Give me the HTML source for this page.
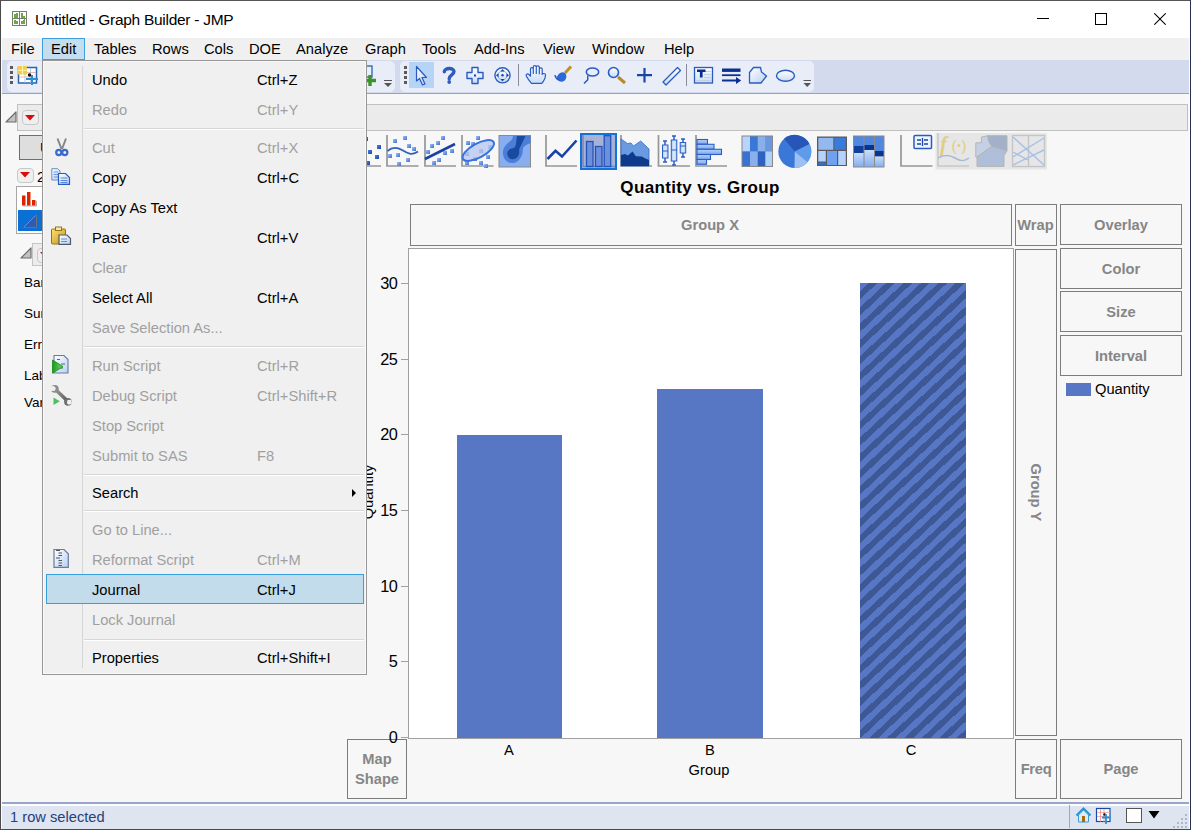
<!DOCTYPE html>
<html><head><meta charset="utf-8">
<style>
*{box-sizing:border-box;margin:0;padding:0}
html,body{width:1191px;height:830px;overflow:hidden;background:#f7f7f7;font-family:"Liberation Sans",sans-serif;color:#000}
.a{position:absolute}
.t{position:absolute;white-space:nowrap;font-size:14.7px;line-height:1}
#frame{position:absolute;left:0;top:0;width:1191px;height:830px;border:1px solid #555;border-left-color:#4a4a4a;border-right-color:#26304c;border-bottom-color:#4a4a4a;box-shadow:inset 1px 0 0 #fcfcfc,inset -1px 0 0 #fcfcfc;pointer-events:none;z-index:100}
#title{left:0;top:0;width:1191px;height:38px;background:#fff}
#menubar{left:0;top:38px;width:1191px;height:22px;background:#f0f0f0}
#toolbar{left:0;top:60px;width:1191px;height:34px;background:#d4daee;border-bottom:1px solid #95a1c9}
.tg{position:absolute;top:1px;height:31px;background:#e9edf8;border-radius:5px}
#status{left:0;top:802px;width:1191px;height:28px;background:#dfe5f0;border-top:2px solid #9aa3c8;box-shadow:inset 0 2px 0 #fbfcfe}
.box{position:absolute;border:1px solid #7c7c7c;background:#f7f7f7;color:#868686;font-weight:bold;font-size:14.7px;text-align:center}
.mi{position:absolute;left:92px;white-space:nowrap;font-size:14.7px;line-height:1}
.sc{position:absolute;left:257px;white-space:nowrap;font-size:14.7px;line-height:1}
.dis{color:#a0a0a0}
.yl{left:347px;width:50px;text-align:right;font-size:16.3px;letter-spacing:-0.7px}
.sep{position:absolute;left:84px;width:280px;height:2px;border-top:1px solid #d7d7d7;background:#fff}
</style></head><body>

<!-- title bar -->
<div id="title" class="a">
  <svg class="a" style="left:12px;top:11px" width="15" height="15" viewBox="0 0 15 15" shape-rendering="crispEdges">
    <rect x="0.5" y="0.5" width="14" height="14" fill="#fff" stroke="#7b7b7b"/>
    <path d="M7.5 0V15M0 7.5H15" stroke="#7b7b7b"/>
    <path d="M2 3h2v-1h1.5v4.5H2z" fill="#6aad35"/>
    <path d="M9 2h1.5v3H13v1.5H9z" fill="#6aad35"/>
    <path d="M2 9h1.5v1H5.5v3H2z" fill="#6aad35"/>
    <path d="M9 10h1.5v-1H12v-1h1v5H9z" fill="#6aad35"/>
  </svg>
  <div class="t" style="left:35px;top:12px;font-size:15.5px;letter-spacing:-0.28px">Untitled - Graph Builder - JMP</div>
  <!-- window controls -->
  <div class="a" style="left:1037px;top:18px;width:12px;height:1px;background:#000"></div>
  <div class="a" style="left:1095px;top:13px;width:12px;height:12px;border:1px solid #000"></div>
  <svg class="a" style="left:1154px;top:13px" width="12" height="12" viewBox="0 0 12 12"><path d="M0.3 0.3L11.7 11.7M11.7 0.3L0.3 11.7" stroke="#000" stroke-width="1.05"/></svg>
</div>

<!-- menu bar -->
<div id="menubar" class="a">
  <div class="a" style="left:42px;top:0;width:43px;height:22px;background:#c4def0;border:1px solid #3d9fdb"></div>
  <div class="t" style="left:11px;top:4px">File</div>
  <div class="t" style="left:51px;top:4px">Edit</div>
  <div class="t" style="left:94px;top:4px">Tables</div>
  <div class="t" style="left:152px;top:4px">Rows</div>
  <div class="t" style="left:204px;top:4px">Cols</div>
  <div class="t" style="left:249px;top:4px">DOE</div>
  <div class="t" style="left:296px;top:4px">Analyze</div>
  <div class="t" style="left:365px;top:4px">Graph</div>
  <div class="t" style="left:422px;top:4px">Tools</div>
  <div class="t" style="left:474px;top:4px">Add-Ins</div>
  <div class="t" style="left:543px;top:4px">View</div>
  <div class="t" style="left:592px;top:4px">Window</div>
  <div class="t" style="left:664px;top:4px">Help</div>
</div>

<!-- toolbar -->
<div id="toolbar" class="a">
  <div class="tg" style="left:7px;width:388px"></div>
  <div class="tg" style="left:400px;width:414px"></div>
  <div class="a" style="left:409px;top:2px;width:25px;height:26px;background:#b5d4f6"></div>
  <svg class="a" style="left:0;top:0" width="830" height="34" viewBox="0 60 830 34">
    <defs>
      <linearGradient id="tg1" x1="0" y1="0" x2="0" y2="1"><stop offset="0" stop-color="#ffffff"/><stop offset="1" stop-color="#c8dcf4"/></linearGradient>
      <linearGradient id="tg2" x1="0" y1="0" x2="1" y2="1"><stop offset="0" stop-color="#ffffff"/><stop offset="1" stop-color="#b8d0f0"/></linearGradient>
    </defs>
    <!-- gripper 1 -->
    <g fill="#5a5a5a"><rect x="10" y="66" width="3" height="3"/><rect x="10" y="71" width="3" height="3"/><rect x="10" y="76" width="3" height="3"/><rect x="10" y="81" width="3" height="3"/></g>
    <!-- first icon: data grid w/ star -->
    <rect x="18.5" y="67.5" width="18" height="15.5" fill="#fff" stroke="#2a62b0" stroke-width="1.5"/>
    <path d="M19 72.5H36M19 77H36" stroke="#f0a0a0" stroke-width="0.8"/>
    <path d="M25 68V83M30.5 68V83" stroke="#a0c0e8" stroke-width="0.8"/>
    <rect x="18" y="66" width="9" height="8.5" fill="#f0cc50"/>
    <path d="M22.5 66V74.5M18 70.25H27" stroke="#fff3b0" stroke-width="1"/>
    <circle cx="29.5" cy="75" r="1.7" fill="#111"/>
    <path d="M26 79H38M32 75V85" stroke="#2a90d0" stroke-width="2"/>
    <!-- visible part of last icon of group 1 -->
    <rect x="364" y="66" width="8" height="11" fill="#e8f0fa" stroke="#2a62b0" stroke-width="1.3"/>
    <path d="M365 80.5H376M370 75V86" stroke="#3c9428" stroke-width="3.4"/>
    <!-- chevron 1 -->
    <path d="M384 80.5H392" stroke="#555" stroke-width="1"/>
    <path d="M384 83H392L388 87Z" fill="#555"/>
    <!-- gripper 2 -->
    <g fill="#5a5a5a"><rect x="404" y="66" width="3" height="3"/><rect x="404" y="71" width="3" height="3"/><rect x="404" y="76" width="3" height="3"/><rect x="404" y="81" width="3" height="3"/></g>
    <!-- arrow -->
    <path d="M416.5 66.5V81L419.5 78.5L422.5 85L425 84L422 77.5H426.5Z" fill="url(#tg2)" stroke="#2a5bbf" stroke-width="1.2" stroke-linejoin="round"/>
    <!-- ? -->
    <path d="M444.3 71.8C444.3 67.6 454 67.3 454 71.6C454 75 449.2 74.8 449.2 78.8" fill="none" stroke="#2d5cc0" stroke-width="3.4" stroke-linecap="round"/><circle cx="449.2" cy="82" r="1.9" fill="#2d5cc0"/>
    <!-- move plus -->
    <path d="M472 67.5H478V72.5H483V78.5H478V83.5H472V78.5H467V72.5H472Z" fill="url(#tg1)" stroke="#2a5bbf" stroke-width="1.4" stroke-linejoin="round"/>
    <rect x="474" y="74.5" width="2" height="2" fill="#1a44a8"/>
    <!-- target -->
    <circle cx="502.5" cy="75.3" r="7.6" fill="url(#tg1)" stroke="#2a5bbf" stroke-width="1.4"/>
    <circle cx="502.5" cy="75.3" r="4.5" fill="none" stroke="#8ab0e8" stroke-width="1"/>
    <path d="M502.5 69L500.5 71.5H504.5ZM502.5 81.6L500.5 79H504.5ZM496 75.3L498.5 73.3V77.3ZM509 75.3L506.5 73.3V77.3Z" fill="#1a44a8"/>
    <circle cx="502.5" cy="75.3" r="1.2" fill="#1a44a8"/>
    <!-- sep -->
    <path d="M518.5 64V86" stroke="#8a8a9a" stroke-width="1"/>
    <!-- hand -->
    <path d="M531.5 83.3C529.5 81 527.5 78.5 526.3 76C525.6 74.5 527.3 73.2 528.8 74.5L530.5 76.2V69C530.5 67.2 533.3 67.2 533.3 69V73.5V67C533.3 65.2 536.3 65.2 536.3 67V73.5V67.2C536.3 65.4 539.3 65.4 539.3 67.2V73.8V69.2C539.3 67.5 542.2 67.5 542.2 69.2V74.5C542.2 73.2 545.5 73 545.5 74.8C545.5 78.5 543.5 81.5 541.8 83.3Z" fill="url(#tg1)" stroke="#2a5bbf" stroke-width="1.2" stroke-linejoin="round"/>
    <!-- brush -->
    <path d="M565 73L571 66.5" stroke="#c09020" stroke-width="3"/>
    <path d="M556 76C557 81 561 83 564 81C567 79 567 75 565 73C563 71.5 560 72 558 75C557.5 76.5 556.5 77 556 76Z" fill="#2a6ad8"/>
    <path d="M555 75C555.5 78 557 79.5 559 80" fill="none" stroke="#2a5bbf" stroke-width="1.5"/>
    <!-- lasso -->
    <ellipse cx="592.5" cy="72" rx="6.2" ry="4" fill="none" stroke="#2a5bbf" stroke-width="1.5"/>
    <path d="M588 75.5C587 78 588.5 78.5 587.5 80L584 83.5" fill="none" stroke="#2a5bbf" stroke-width="1.5"/>
    <!-- magnifier -->
    <path d="M618 77L625 83" stroke="#b88a30" stroke-width="3"/>
    <circle cx="613.5" cy="72.5" r="5" fill="url(#tg1)" stroke="#2a5bbf" stroke-width="1.6"/>
    <!-- crosshair -->
    <path d="M644.5 68V82.5M637 75.2H652" stroke="#1a44a8" stroke-width="2.2"/>
    <!-- ruler -->
    <path d="M663 82L677.5 67.5L680.5 70.5L666 85Z" fill="url(#tg1)" stroke="#2a5bbf" stroke-width="1.3" stroke-linejoin="round"/>
    <!-- sep -->
    <path d="M686.5 64V86" stroke="#8a8a9a" stroke-width="1"/>
    <!-- T text -->
    <rect x="694.5" y="67.5" width="18" height="15.5" fill="url(#tg1)" stroke="#2a5bbf" stroke-width="1.3"/>
    <path d="M704 71.5H711M704 74.5H711M704 77.5H711M696 80.5H711" stroke="#c4d0e2" stroke-width="1"/>
    <path d="M697 69.6H705.5V72H702.6V77.5H699.9V72H697Z" fill="#0a2a90"/>
    <!-- lines arrow -->
    <rect x="722" y="68.5" width="18.5" height="3.4" fill="#0a3094"/>
    <path d="M722 75.2H740.5" stroke="#0a3094" stroke-width="1.8"/>
    <path d="M722 80.5H737" stroke="#0a3094" stroke-width="2"/>
    <path d="M736 77L741.2 80.5L736 84Z" fill="#0a3094"/>
    <!-- polygon -->
    <path d="M749.5 72.5L753.5 67.5H760.5L761.5 72L766.5 76L761 83H749.5Z" fill="url(#tg2)" stroke="#2a5bbf" stroke-width="1.3" stroke-linejoin="round"/>
    <!-- ellipse -->
    <ellipse cx="785.5" cy="75.8" rx="9" ry="5.5" fill="url(#tg1)" stroke="#2a5bbf" stroke-width="1.4"/>
    <!-- chevron 2 -->
    <path d="M803.5 80.5H811" stroke="#555" stroke-width="1"/>
    <path d="M803.5 83H811L807.25 87Z" fill="#555"/>
  </svg>

</div>

<!-- content -->
<div class="a" style="left:0;top:94px;width:1191px;height:708px;background:#f7f7f7">
  
</div>


  <!-- band -->
  <div class="a" style="left:17px;top:104px;width:1171px;height:27px;background:#ebebeb;border:1px solid #c0c0c0"></div>
  <svg class="a" style="left:5px;top:111px" width="12" height="12"><path d="M1 11L11 1V11Z" fill="#c2c2c2" stroke="#6d6d6d" stroke-width="1.2" stroke-linejoin="round"/></svg>
  <div class="a" style="left:22px;top:110px;width:17px;height:15px;border:1px solid #c8c8c8;border-radius:4px;background:#efefef"></div>
  <svg class="a" style="left:25px;top:115px" width="11" height="6"><path d="M0 0H10L5 5.5Z" fill="#d80c0c"/></svg>
  <!-- undo button -->
  <div class="a" style="left:19px;top:135px;width:60px;height:25px;background:#dedede;border:1px solid #6e6e6e"></div>
  <div class="t" style="left:40px;top:141px">U</div>
  <!-- dropdown 2 -->
  <div class="a" style="left:17px;top:168px;width:17px;height:15px;border:1px solid #c8c8c8;border-radius:4px;background:#efefef"></div>
  <svg class="a" style="left:20px;top:172px" width="11" height="6"><path d="M0 0H10L5 5.5Z" fill="#d80c0c"/></svg>
  <div class="t" style="left:37px;top:170px">2</div>
  <!-- listbox -->
  <div class="a" style="left:16px;top:186px;width:60px;height:48px;background:#fff;border:1px solid #a6a6a6"></div>
  <svg class="a" style="left:22px;top:192px" width="16" height="16"><rect x="0" y="3.5" width="3.5" height="10" fill="#dd2400"/><rect x="5" y="0" width="3.5" height="13.5" fill="#dd2400"/><rect x="10" y="8" width="3.5" height="5.5" fill="#dd2400"/><path d="M1 14H14.5V9" stroke="#5a5a5a" stroke-width="0.8" fill="none" opacity="0.6"/></svg>
  <div class="a" style="left:18px;top:210px;width:58px;height:21px;background:#0b70d6"></div>
  <svg class="a" style="left:23px;top:214px" width="14" height="14"><path d="M0.5 13.5L13 1V13.5Z" fill="#2f5bb0"/><path d="M1 13L12.5 1.5" stroke="#6aa0f0" stroke-width="0.8"/><path d="M0.5 13.5H13.5V1" stroke="#8a7060" stroke-width="0.8" fill="none"/></svg>
  <!-- second disclosure -->
  <div class="a" style="left:32px;top:243px;width:60px;height:23px;background:#ececec;border:1px solid #c4c4c4"></div>
  <svg class="a" style="left:20px;top:247px" width="12" height="12"><path d="M1 11L11 1V11Z" fill="#c2c2c2" stroke="#6d6d6d" stroke-width="1.2" stroke-linejoin="round"/></svg>
  <div class="a" style="left:37px;top:248px;width:17px;height:15px;border:1px solid #c8c8c8;border-radius:4px;background:#efefef"></div>
  <svg class="a" style="left:40px;top:252px" width="11" height="6"><path d="M0 0H10L5 5.5Z" fill="#d80c0c"/></svg>
  <div class="t" style="left:24px;top:276px;font-size:13.5px">Bar</div>
  <div class="t" style="left:24px;top:307px;font-size:13.5px">Sum</div>
  <div class="t" style="left:24px;top:338px;font-size:13.5px">Err</div>
  <div class="t" style="left:24px;top:369px;font-size:13.5px">Lab</div>
  <div class="t" style="left:24px;top:396px;font-size:13.5px">Var</div>

  <!-- chart type icons -->
  <svg class="a" style="left:340px;top:130px" width="720" height="42" viewBox="340 130 720 42" shape-rendering="geometricPrecision">
    <defs>
      <linearGradient id="sq" x1="0" y1="0" x2="1" y2="1"><stop offset="0" stop-color="#9fc0f4"/><stop offset="1" stop-color="#3f70d0"/></linearGradient>
      <linearGradient id="sqd" x1="0" y1="0" x2="1" y2="1"><stop offset="0" stop-color="#4f80e0"/><stop offset="1" stop-color="#1a44a8"/></linearGradient>
      <linearGradient id="bx" x1="0" y1="0" x2="1" y2="0"><stop offset="0" stop-color="#a8c8f6"/><stop offset="0.5" stop-color="#e0eefc"/><stop offset="1" stop-color="#a8c8f6"/></linearGradient>
      <linearGradient id="hb" x1="0" y1="0" x2="0" y2="1"><stop offset="0" stop-color="#b8d4fa"/><stop offset="1" stop-color="#7aa4ea"/></linearGradient>
      <linearGradient id="mz" x1="0" y1="0" x2="0" y2="1"><stop offset="0" stop-color="#c8defc"/><stop offset="1" stop-color="#86aeee"/></linearGradient>
    </defs>
    <g fill="none" stroke="#969696" stroke-width="1.7">
      <!-- axes -->
      <path d="M349 135V166H381"/>
      <path d="M387 135V166H418.5"/>
      <path d="M425 135V166H456"/>
      <path d="M462 135V166H493.5"/>
      <path d="M546 135V166H577"/>
      <path d="M621 135V166H652"/>
      <path d="M658.5 135V166H690"/>
      <path d="M696 135V166H727"/>
      <path d="M901 135V166H932.5"/>
    </g>
    <!-- points icon -->
    <g fill="url(#sqd)">
      <rect x="364" y="137" width="4" height="4"/><rect x="377" y="145" width="4" height="4"/><rect x="368" y="150" width="4" height="4"/>
      <rect x="375" y="155" width="4" height="4"/><rect x="366" y="161" width="4" height="4"/><rect x="358" y="141" width="4" height="4"/>
    </g>
    <!-- smoother -->
    <g fill="url(#sq)">
      <rect x="393" y="139" width="4" height="4"/><rect x="403" y="136" width="4" height="4"/><rect x="407" y="144" width="4" height="4"/>
      <rect x="412" y="147" width="4" height="4"/><rect x="388" y="154" width="4" height="4"/><rect x="396" y="153" width="4" height="4"/>
      <rect x="406" y="158" width="4" height="4"/><rect x="397" y="162" width="4" height="4"/>
    </g>
    <path d="M387.5 151C392 147 397 147 402 150S412 156 418 151.5" fill="none" stroke="#3060b8" stroke-width="1.8"/>
    <!-- line fit -->
    <g fill="url(#sq)">
      <rect x="441" y="136" width="4" height="4"/><rect x="436" y="141" width="4" height="4"/><rect x="430" y="144" width="4" height="4"/>
      <rect x="426" y="150" width="4" height="4"/><rect x="443" y="151" width="4" height="4"/><rect x="450" y="149" width="4" height="4"/>
      <rect x="437" y="158" width="4" height="4"/><rect x="432" y="161" width="4" height="4"/>
    </g>
    <path d="M425 159L455 144" stroke="#1a42a4" stroke-width="2.6"/>
    <!-- ellipse -->
    <g fill="url(#sq)">
      <rect x="476" y="136" width="4" height="4"/><rect x="466" y="141" width="4" height="4"/><rect x="471" y="142" width="4" height="4"/>
      <rect x="488" y="145" width="4" height="4"/><rect x="479" y="149" width="4" height="4"/><rect x="465" y="152" width="4" height="4"/>
      <rect x="486" y="155" width="4" height="4"/><rect x="473" y="157" width="4" height="4"/><rect x="465" y="161" width="4" height="4"/>
      <rect x="479" y="161" width="4" height="4"/><rect x="484" y="164" width="4" height="4"/>
    </g>
    <ellipse cx="478.3" cy="150.5" rx="17.5" ry="7" transform="rotate(-29 478.3 150.5)" fill="#b4c6f0" fill-opacity="0.75" stroke="#3a72dc" stroke-width="2"/>
    <!-- contour -->
    <rect x="499" y="135.5" width="31.5" height="31.5" fill="#88aef0" stroke="#8a8a8a" stroke-width="1"/>
    <path d="M513 136H530.5V143C526.5 144.5 523.5 146 523 148.5C522.5 151 523 153 521.5 156C519.5 160.5 516 163.5 511.5 163C506 162.5 502.5 157.5 503 151.5C503.5 146.5 508 143 511 140.5C512.3 139.3 512.8 137.8 513 136Z" fill="#4a7ed8"/>
    <path d="M517 136H525.5L519.5 148.5C518.8 150 519.5 151.5 519 154C518.2 157.5 515.5 159.5 512.5 159.2C509 158.8 507 156 507.3 153C507.6 150.3 509.8 148.8 512 148.5C514 148.2 515.2 147 515.8 145Z" fill="#1a4aa0"/>
    <!-- line chart -->
    <path d="M547.5 159L555.5 150.8L562 156.5L576.5 140.5" fill="none" stroke="#1a42a4" stroke-width="2.6"/>
    <!-- bar chart selected -->
    <rect x="581" y="134" width="35" height="35" fill="#a6b3d6" stroke="#1272d8" stroke-width="2"/>
    <path d="M583 135V166.5H615" fill="none" stroke="#7787b8" stroke-width="1.5"/>
    <g fill="#6d90dc" stroke="#2453b8" stroke-width="1.3">
      <rect x="586.5" y="141.5" width="6.5" height="25"/>
      <rect x="595.5" y="146.5" width="6.5" height="20"/>
      <rect x="604.2" y="135.7" width="6.5" height="30.8"/>
    </g>
    <!-- area -->
    <path d="M621 139L627.5 143.5L631 143L633.5 146L640.7 141L649 149V166H621Z" fill="#6a9ae0" stroke="#3a6cc8" stroke-width="0.8"/>
    <path d="M621 155L625 154L628 155.5L632.5 151.5L635.8 156.3L641.7 156.6L645 158.2L649 160V166H621Z" fill="#0d3a8c"/>
    <!-- box plot -->
    <g stroke="#2a5fc8" stroke-width="1" fill="url(#bx)">
      <path d="M665 141V145M665 158V162M663 141H667M663 162H667M674 136V140M674 161V165M672 136H676M672 165H676M683 139V142.5M683 153V157M681 139H685M681 157H685" fill="none" stroke-width="1.5"/>
      <rect x="662.5" y="145" width="5.5" height="13"/>
      <rect x="671.3" y="140" width="5.5" height="21"/>
      <rect x="680.2" y="142.5" width="5.5" height="10.5"/>
      <path d="M662.5 151H668M671.3 150H677M680.2 146H686" fill="none"/>
    </g>
    <!-- histogram -->
    <g fill="url(#hb)" stroke="#2a5fc8" stroke-width="1.1">
      <rect x="697" y="139.5" width="10.5" height="4.8"/>
      <rect x="697" y="144.3" width="17" height="5"/>
      <rect x="697" y="149.3" width="24.5" height="5.2"/>
      <rect x="697" y="154.5" width="13.5" height="5"/>
      <rect x="697" y="159.5" width="9.5" height="4.8"/>
    </g>
    <!-- heatmap -->
    <rect x="741.5" y="135.5" width="31.5" height="31.5" fill="#888"/>
    <rect x="742.5" y="136.5" width="7.5" height="15" fill="#b8d4fa"/><rect x="750" y="136.5" width="7.8" height="15" fill="#3a78d8"/>
    <rect x="757.8" y="136.5" width="7.6" height="15" fill="#8ab0ec"/><rect x="765.4" y="136.5" width="6.6" height="15" fill="#6a98e0"/>
    <rect x="742.5" y="151.5" width="7.5" height="14.5" fill="#3a72d4"/><rect x="750" y="151.5" width="7.8" height="14.5" fill="#8ab0ec"/>
    <rect x="757.8" y="151.5" width="7.6" height="14.5" fill="#2f62c0"/><rect x="765.4" y="151.5" width="6.6" height="14.5" fill="#b0d0fa"/>
    <!-- pie -->
    <circle cx="794.8" cy="151.5" r="16.5" fill="#3a78d8"/>
    <path d="M794.8 151.5L784 138.8A16.5 16.5 0 0 1 809.5 144Z" fill="#2856b8"/>
    <path d="M794.8 151.5L809.5 144A16.5 16.5 0 0 1 807.5 162Z" fill="#5e9be8"/>
    <path d="M794.8 151.5L807.5 162A16.5 16.5 0 0 1 794.5 168Z" fill="#9cc0f4"/>
    <!-- treemap -->
    <rect x="817" y="136.5" width="30" height="29.5" fill="#5a5a5a"/>
    <rect x="818.3" y="137.8" width="15" height="12" fill="#94b8f0"/>
    <rect x="834.3" y="137.8" width="11.5" height="12" fill="#3a7ad8"/>
    <rect x="818.3" y="151" width="7.5" height="10.5" fill="#b5d3fa"/>
    <rect x="818.3" y="162.5" width="7.5" height="2.5" fill="#3070d0"/>
    <rect x="827" y="151" width="10" height="14" fill="#70a0f0"/>
    <rect x="838.2" y="151" width="7.6" height="14" fill="#b5d3fa"/>
    <!-- mosaic -->
    <rect x="853" y="135.5" width="31.5" height="32" fill="#8a8a8a"/>
    <rect x="854" y="136.5" width="9.5" height="9.5" fill="#5088e0"/><rect x="854" y="146" width="9.5" height="7" fill="#123e9c"/><rect x="854" y="153" width="9.5" height="13.5" fill="url(#mz)"/>
    <rect x="864.5" y="136.5" width="9.5" height="8.5" fill="#5088e0"/><rect x="864.5" y="145" width="9.5" height="5" fill="#0a3494"/><rect x="864.5" y="150" width="9.5" height="16.5" fill="url(#mz)"/>
    <rect x="875" y="136.5" width="8.5" height="14.5" fill="#5088e0"/><rect x="875" y="151" width="8.5" height="5.5" fill="#0a3494"/><rect x="875" y="156.5" width="8.5" height="10" fill="url(#mz)"/>
    <!-- caption -->
    <rect x="914" y="135.5" width="17.5" height="13" rx="1" fill="#eef4fc" stroke="#2a5bbf" stroke-width="1.5"/>
    <path d="M917 140H921M924 140H928M917 144H921M924 144H928M922.5 138V146" stroke="#1a44a8" stroke-width="1.3"/>
    <!-- disabled group -->
    <rect x="935.5" y="133" width="111.5" height="36.5" fill="#e6e6e6"/>
    <path d="M938 133V166H969" fill="none" stroke="#c8c8c8" stroke-width="1.5"/>
    <text x="940" y="151" font-family="Liberation Serif" font-style="italic" font-weight="bold" font-size="21" fill="#e0cc88">f</text>
    <text x="951.5" y="150.5" font-family="Liberation Sans" font-size="15" fill="#e0cc88">(</text><circle cx="958.8" cy="145.5" r="1.5" fill="#e0cc88"/><text x="961.5" y="150.5" font-family="Liberation Sans" font-size="15" fill="#e0cc88">)</text>
    <path d="M938 158C945 154 950 155 955 158S964 162 969 158" fill="none" stroke="#a8b8d8" stroke-width="1.5"/>
    <path d="M975.8 142.8H981.4V137.1L987.8 135.7C988 139 988.5 141 992 146.4L977 157H975.8Z" fill="#c4d0e4" stroke="#b4b4b4" stroke-width="1"/>
    <path d="M987.8 135.7H1007V150.7L998.5 148.6L992 146.4C989 143 988 140 987.8 135.7Z" fill="#a2b0ca" stroke="#b4b4b4" stroke-width="1"/>
    <path d="M977 157L992 146.4L998.5 148.6L1007 150.7L1004 155.7V166.4H977Z" fill="#afbfda" stroke="#b4b4b4" stroke-width="1"/>
    <rect x="1012.5" y="135.5" width="32" height="31" fill="none" stroke="#c4c4c4" stroke-width="1.3"/>
    <path d="M1028.5 135.5V166.5" stroke="#c4c4c4" stroke-width="1.3"/>
    <path d="M1013 137L1044 165M1013 157L1044 138M1013 165L1044 150M1013 152L1028 160" stroke="#a8c0e8" stroke-width="1.4"/>
  </svg>

  <!-- chart title -->
  <div class="t" style="left:600px;width:200px;text-align:center;top:179px;font-size:17px;font-weight:bold;letter-spacing:0.35px">Quantity vs. Group</div>
  <!-- boxes -->
  <div class="box" style="left:410px;top:204px;width:602px;height:42px;line-height:41px;text-indent:-2px">Group X</div>
  <div class="box" style="left:1015px;top:204px;width:42px;height:42px;line-height:41px;letter-spacing:0px;text-indent:-1px">Wrap</div>
  <div class="box" style="left:1060px;top:204px;width:122px;height:41px;line-height:41px">Overlay</div>
  <div class="box" style="left:1060px;top:248px;width:122px;height:41px;line-height:41px">Color</div>
  <div class="box" style="left:1060px;top:291px;width:122px;height:41px;line-height:41px">Size</div>
  <div class="box" style="left:1060px;top:335px;width:122px;height:41px;line-height:41px">Interval</div>
  <div class="box" style="left:1015px;top:249px;width:42px;height:487px"></div>
  <div class="t" style="left:986px;width:100px;text-align:center;top:485px;transform:rotate(90deg);font-weight:bold;color:#868686;font-size:14.7px">Group Y</div>
  <div class="box" style="left:1015px;top:739px;width:42px;height:60px;line-height:58px;letter-spacing:-0.3px">Freq</div>
  <div class="box" style="left:1060px;top:739px;width:122px;height:60px;line-height:58px">Page</div>
  <div class="box" style="left:347px;top:739px;width:60px;height:60px;line-height:20px;padding-top:9px">Map<br>Shape</div>
  <!-- legend -->
  <div class="a" style="left:1066px;top:383px;width:25px;height:13px;background:#5777c4"></div>
  <div class="t" style="left:1095px;top:382px">Quantity</div>
  <!-- plot -->
  <div class="a" style="left:408px;top:248px;width:606px;height:491px;background:#fff;border:1px solid #a0a0a0"></div>
  <div class="a" style="left:457px;top:435px;width:105px;height:303px;background:#5777c4"></div>
  <div class="a" style="left:657px;top:389px;width:106px;height:349px;background:#5777c4"></div>
  <div class="a" style="left:860px;top:283px;width:106px;height:455px;background:repeating-linear-gradient(137deg,#5777c4 0,#5777c4 5.95px,#3e5895 5.95px,#3e5895 11.9px)"></div>
  <div class="a" style="left:401px;top:283px;width:7px;height:1px;background:#a0a0a0"></div>
  <div class="t yl" style="top:275px">30</div>
  <div class="a" style="left:401px;top:359px;width:7px;height:1px;background:#a0a0a0"></div>
  <div class="t yl" style="top:351px">25</div>
  <div class="a" style="left:401px;top:434px;width:7px;height:1px;background:#a0a0a0"></div>
  <div class="t yl" style="top:426px">20</div>
  <div class="a" style="left:401px;top:510px;width:7px;height:1px;background:#a0a0a0"></div>
  <div class="t yl" style="top:502px">15</div>
  <div class="a" style="left:401px;top:586px;width:7px;height:1px;background:#a0a0a0"></div>
  <div class="t yl" style="top:578px">10</div>
  <div class="a" style="left:401px;top:661px;width:7px;height:1px;background:#a0a0a0"></div>
  <div class="t yl" style="top:653px">5</div>
  <div class="a" style="left:401px;top:737px;width:7px;height:1px;background:#a0a0a0"></div>
  <div class="t yl" style="top:729px">0</div>
  <div class="t" style="left:484px;width:50px;text-align:center;top:743px">A</div>
  <div class="t" style="left:685px;width:50px;text-align:center;top:743px">B</div>
  <div class="t" style="left:886px;width:50px;text-align:center;top:743px">C</div>
  <div class="t" style="left:659px;width:100px;text-align:center;top:763px">Group</div>
  <div class="t" style="left:361px;top:492px;transform:rotate(-90deg) translate(-50%,0);transform-origin:left top;font-size:14.7px">Quantity</div>

<!-- status bar -->
<div id="status" class="a">
  <div class="t" style="left:10px;top:6px;color:#26407a">1 row selected</div>
  <div class="a" style="left:1069px;top:1px;width:1px;height:23px;background:#a0a8b8"></div>
  <svg class="a" style="left:1070px;top:-2px" width="121" height="28" viewBox="1070 802 121 28">
    <path d="M1076.5 815.5L1083.5 808.5L1090.5 815.5" fill="none" stroke="#2a90d0" stroke-width="2"/>
    <path d="M1078.5 815V822H1088.5V815L1083.5 810Z" fill="#d8ecfa" stroke="#3a9ad8" stroke-width="1"/>
    <rect x="1082" y="816" width="3" height="6" fill="#a86a10"/>
    <rect x="1096.5" y="808.5" width="13.5" height="13" fill="#fff" stroke="#1a4aa8" stroke-width="1.2"/>
    <path d="M1097 812.5H1110M1097 816.5H1110" stroke="#f0a0a0" stroke-width="0.8"/>
    <path d="M1100.5 809V822M1104 809V822" stroke="#f08080" stroke-width="0.7"/>
    <circle cx="1104.5" cy="814.5" r="1.3" fill="#111"/>
    <path d="M1102 817.5H1111M1106 814V824" stroke="#2a90d0" stroke-width="1.8"/>
    <rect x="1126.5" y="808.5" width="15" height="14" fill="#fff" stroke="#555" stroke-width="1"/>
    <path d="M1148.5 811H1159.5L1154 818.5Z" fill="#000"/>
    <g fill="#b0b8c8">
      <rect x="1185" y="814" width="2" height="2"/>
      <rect x="1181" y="818" width="2" height="2"/><rect x="1185" y="818" width="2" height="2"/>
      <rect x="1177" y="822" width="2" height="2"/><rect x="1181" y="822" width="2" height="2"/><rect x="1185" y="822" width="2" height="2"/>
      <rect x="1173" y="826" width="2" height="2"/><rect x="1177" y="826" width="2" height="2"/><rect x="1181" y="826" width="2" height="2"/><rect x="1185" y="826" width="2" height="2"/>
    </g>
  </svg>

</div>

<!-- dropdown menu -->
<div class="a" style="left:42px;top:60px;width:325px;height:615px;background:#f0f0f0;border:1px solid #979797;box-shadow:inset 1px 1px 0 #f9f9f9,inset -1px -1px 0 #f9f9f9">
</div>
<div class="a" style="left:82px;top:66px;width:1px;height:602px;background:#d5d5d5"></div>
<div class="a" style="left:46px;top:574px;width:318px;height:30px;background:#c2dcec;border:1px solid #36a0dc"></div>
<div id="menuitems">
  <div class="mi" style="top:73px">Undo</div><div class="sc" style="top:73px">Ctrl+Z</div>
  <div class="mi dis" style="top:103px">Redo</div><div class="sc dis" style="top:103px">Ctrl+Y</div>
  <div class="sep" style="top:128px"></div>
  <div class="mi dis" style="top:141px">Cut</div><div class="sc dis" style="top:141px">Ctrl+X</div>
  <div class="mi" style="top:171px">Copy</div><div class="sc" style="top:171px">Ctrl+C</div>
  <div class="mi" style="top:201px">Copy As Text</div>
  <div class="mi" style="top:231px">Paste</div><div class="sc" style="top:231px">Ctrl+V</div>
  <div class="mi dis" style="top:261px">Clear</div>
  <div class="mi" style="top:291px">Select All</div><div class="sc" style="top:291px">Ctrl+A</div>
  <div class="mi dis" style="top:321px">Save Selection As...</div>
  <div class="sep" style="top:346px"></div>
  <div class="mi dis" style="top:359px">Run Script</div><div class="sc dis" style="top:359px">Ctrl+R</div>
  <div class="mi dis" style="top:389px">Debug Script</div><div class="sc dis" style="top:389px">Ctrl+Shift+R</div>
  <div class="mi dis" style="top:419px">Stop Script</div>
  <div class="mi dis" style="top:449px">Submit to SAS</div><div class="sc dis" style="top:449px">F8</div>
  <div class="sep" style="top:474px"></div>
  <div class="mi" style="top:486px">Search</div>
  <div class="sep" style="top:510px"></div>
  <div class="mi dis" style="top:523px">Go to Line...</div>
  <div class="mi dis" style="top:553px">Reformat Script</div><div class="sc dis" style="top:553px">Ctrl+M</div>
  <div class="mi" style="top:583px">Journal</div><div class="sc" style="top:583px">Ctrl+J</div>
  <div class="mi dis" style="top:613px">Lock Journal</div>
  <div class="sep" style="top:639px"></div>
  <div class="mi" style="top:651px">Properties</div><div class="sc" style="top:651px">Ctrl+Shift+I</div>
  <svg class="a" style="left:351px;top:488px" width="6" height="10"><path d="M1 1L5 5L1 9z" fill="#000"/></svg>
</div>
<svg class="a" style="left:40px;top:130px" width="40" height="450" viewBox="40 130 40 450">
  <defs>
    <linearGradient id="docg" x1="0" y1="0" x2="1" y2="1"><stop offset="0" stop-color="#ffffff"/><stop offset="1" stop-color="#b8d0f4"/></linearGradient>
    <linearGradient id="clip" x1="0" y1="0" x2="1" y2="1"><stop offset="0" stop-color="#ffe070"/><stop offset="1" stop-color="#c89418"/></linearGradient>
    <linearGradient id="grn" x1="0" y1="0" x2="1" y2="0"><stop offset="0" stop-color="#1a9a1a"/><stop offset="1" stop-color="#70d870"/></linearGradient>
    <linearGradient id="wr" x1="0" y1="0" x2="1" y2="1"><stop offset="0" stop-color="#9a9a9a"/><stop offset="1" stop-color="#5a5a5a"/></linearGradient>
  </defs>
  <!-- scissors -->
  <path d="M57.5 138.5L61.5 149M66 138.5L62 149" stroke="#808890" stroke-width="2"/>
  <circle cx="58.8" cy="152.5" r="2.6" fill="none" stroke="#3a6ad0" stroke-width="2.2"/>
  <circle cx="64.8" cy="152.5" r="2.6" fill="none" stroke="#3a6ad0" stroke-width="2.2"/>
  <!-- copy -->
  <path d="M51.8 168.7H57.5L60 171V180H51.8Z" fill="url(#docg)" stroke="#6a8ac8" stroke-width="1"/>
  <path d="M53.5 172H58M53.5 174.5H58M53.5 177H58" stroke="#5a8ad8" stroke-width="0.9"/>
  <path d="M58.5 173.5H65.5L69.5 177.5V184.3H58.5Z" fill="url(#docg)" stroke="#2a5bbf" stroke-width="1.2"/>
  <path d="M60.5 178H67.5M60.5 180.5H67.5M60.5 182.5H67.5" stroke="#4a7ad8" stroke-width="0.9"/>
  <!-- paste -->
  <rect x="51.5" y="229" width="14" height="15" rx="1" fill="url(#clip)" stroke="#9a7010" stroke-width="1"/>
  <rect x="55.5" y="227" width="6" height="3.5" fill="#f8e8a0" stroke="#8a6a10" stroke-width="0.9"/>
  <path d="M59 235H67L70.5 238.5V244.3H59Z" fill="url(#docg)" stroke="#505a6a" stroke-width="1.2"/>
  <path d="M61 239H67M61 241.5H67" stroke="#6a80a8" stroke-width="0.9"/>
  <!-- run script -->
  <path d="M54 355.5H64L68 359.5V373H54Z" fill="url(#docg)" stroke="#6a7aa0" stroke-width="1.1"/>
  <path d="M57 359.5H60M61 364H65M60 368H63" stroke="#555" stroke-width="0.9"/>
  <path d="M52.5 360L63 366.6L52.5 373.3Z" fill="url(#grn)" stroke="#138a13" stroke-width="0.8"/>
  <!-- debug wrench -->
  <path d="M55.5 389.5L67.5 401" stroke="url(#wr)" stroke-width="3.6"/>
  <circle cx="54.8" cy="388.8" r="3.9" fill="#8c8c8c"/>
  <path d="M50.5 386.5L53.8 386L55.8 388L55 390.8L51 391Z" fill="#f0f0f0"/>
  <circle cx="68" cy="401.8" r="3.9" fill="#6e6e6e"/>
  <path d="M71.8 404L68.5 404.8L66.8 403L67.5 400L71.5 399.8Z" fill="#f0f0f0"/>
  <path d="M53.5 397.5L59.8 401.3L53.5 405Z" fill="#4cc060"/>
  <!-- reformat -->
  <path d="M54 549.5H64L68.3 553.8V567.3H54Z" fill="url(#docg)" stroke="#6a7aa0" stroke-width="1.2"/>
  <path d="M56 550.5H60M58.5 553H62M58.5 555.5H62M56 558H60M58.5 560.5H62M58.5 563H62M58.5 565.5H62" stroke="#444" stroke-width="0.9"/>
</svg>


<div id="frame"></div>
</body></html>
